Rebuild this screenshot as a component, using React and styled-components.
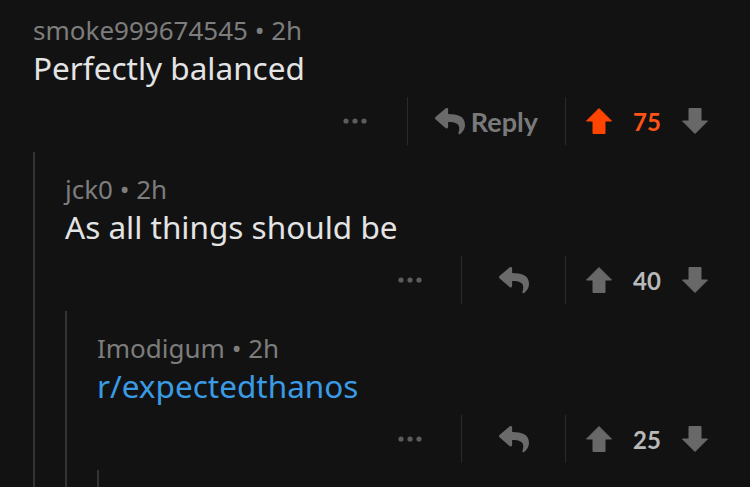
import React from "react";
import styled, { createGlobalStyle } from "styled-components";
import { FaReply } from "react-icons/fa";

const GlobalStyle = createGlobalStyle`
  html, body {
    margin: 0;
    padding: 0;
    background: #121212;
    height: 100%;
    overflow: hidden;
  }
  * { box-sizing: border-box; }
`;

const comments = [
  {
    author: "smoke999674545",
    age: "2h",
    body: "Perfectly balanced",
    score: 75,
    voted: true,
    wideReply: true,
  },
  {
    author: "jck0",
    age: "2h",
    body: "As all things should be",
    score: 40,
  },
  {
    author: "Imodigum",
    age: "2h",
    body: "r/expectedthanos",
    link: true,
    score: 25,
  },
];

const Arrow = ({ down, color }) => (
  <svg width="26" height="26" viewBox="0 0 26 26" style={{ transform: down ? "rotate(180deg)" : "none" }}>
    <path d="M13 0.5 L25.5 13 L19 13 L19 25.5 L7 25.5 L7 13 L0.5 13 Z" fill={color} strokeLinejoin="round" stroke={color} strokeWidth="1" />
  </svg>
);

const Dots = () => (
  <svg width="24" height="6" viewBox="0 0 24 6">
    <circle cx="3" cy="3" r="2.6" fill="#5c5c5c" />
    <circle cx="12" cy="3" r="2.6" fill="#5c5c5c" />
    <circle cx="21" cy="3" r="2.6" fill="#5c5c5c" />
  </svg>
);

// each comment renders the next one as its nested reply
const Comment = ({ items, depth = 0 }) => {
  const [c, ...rest] = items;
  if (!c) return <More />;
  return (
    <Item $root={depth === 0}>
      <Meta>
        {c.author} • {c.age}
      </Meta>
      <Body $link={c.link}>{c.body}</Body>
      <Actions>
        <Section>
          <Dots />
        </Section>
        <Divider />
        <Section>
          <ReplyButton>
            <FaReply size={30} />
            {c.wideReply && <span>Reply</span>}
          </ReplyButton>
        </Section>
        <Divider />
        <Votes>
          <Arrow color={c.voted ? "#ff4500" : "#686868"} />
          <Score $voted={c.voted}>{c.score}</Score>
          <Arrow down color="#686868" />
        </Votes>
      </Actions>
      <Thread>
        <Comment items={rest} depth={depth + 1} />
      </Thread>
    </Item>
  );
};

export default function App() {
  return (
    <Page>
      <GlobalStyle />
      <Comment items={comments} />
    </Page>
  );
}

const Page = styled.div`
  height: 487px;
  overflow: hidden;
  padding: 14px 42px 0 33px;
  font-family: "Noto Sans", sans-serif;
`;

const Item = styled.div`
  padding-top: ${(p) => (p.$root ? "0" : "21px")};
`;

const Meta = styled.div`
  font-size: 26px;
  line-height: 32px;
  color: #7d7d7d;
`;

const Body = styled.div`
  font-size: 31.5px;
  line-height: 44px;
  color: ${(p) => (p.$link ? "#3a9be4" : "#e4e4e4")};
`;

const Actions = styled.div`
  display: flex;
  justify-content: flex-end;
  align-items: stretch;
  height: 48px;
  margin-top: 7px;
`;

const Section = styled.div`
  min-width: 103px;
  padding: 0 27px;
  display: flex;
  align-items: center;
  justify-content: center;
`;

const Divider = styled.div`
  width: 1px;
  background: #2a2a2a;
`;

const ReplyButton = styled.div`
  display: flex;
  align-items: center;
  gap: 6px;
  color: #6a6a6a;
  font-family: Lato, sans-serif;
  font-weight: 700;
  font-size: 27px;
  span {
    color: #7a7a7a;
  }
`;

const Votes = styled.div`
  display: flex;
  align-items: center;
  padding-left: 20px;
  gap: 18px;
`;

const Score = styled.span`
  font-family: Lato, sans-serif;
  font-weight: 700;
  font-size: 24px;
  min-width: 34px;
  text-align: center;
  color: ${(p) => (p.$voted ? "#ff5414" : "#b9b9b9")};
`;

const Thread = styled.div`
  border-left: 2px solid #333333;
  padding-left: 30px;
  margin-top: 7px;
`;

const More = styled.div`
  min-height: 60px;
`;
